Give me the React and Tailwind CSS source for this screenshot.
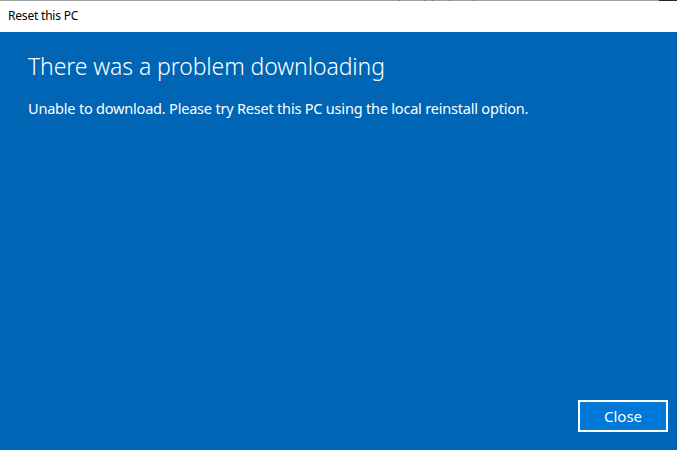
import React from 'react';

const font = { fontFamily: '"Noto Sans", "Open Sans", sans-serif' };

export default function App() {
  const ticks = [399, 424, 432, 449, 473];

  return (
    <div className="w-[677px] h-[450px] flex flex-col bg-white overflow-hidden" style={font}>
      {/* top edge of window behind */}
      <div className="h-px flex bg-[#a0a0a0]">
        <div className="relative flex-1">
          {ticks.map((x) => (
            <span key={x} className="absolute top-0 h-px w-px bg-[#3b7fc4]" style={{ left: x }} />
          ))}
        </div>
        <div className="w-[18px] bg-[#1f2a36]" />
      </div>

      {/* Title bar */}
      <div className="h-[31px] flex items-center pl-[8px] pb-[2px]">
        <span className="text-[12px] text-black tracking-[-0.2px]">Reset this PC</span>
      </div>

      {/* Content */}
      <div className="flex-1 bg-[#0065b5] text-white flex flex-col px-[28px] pt-[18px] pb-[18px]">
        <h1 className="text-[23px] font-light leading-[32px] tracking-[-0.1px]">There was a problem downloading</h1>
        <p className="text-[14.5px] leading-[20px] mt-[16px] tracking-[-0.2px]">
          Unable to download. Please try Reset this PC using the local reinstall option.
        </p>
        <div className="flex-1" />
        <div className="flex justify-end -mr-[19px]">
          <button className="w-[90px] h-[32px] border-2 border-white bg-[#0078d7] text-white text-[15px] leading-none">
            Close
          </button>
        </div>
      </div>
    </div>
  );
}
